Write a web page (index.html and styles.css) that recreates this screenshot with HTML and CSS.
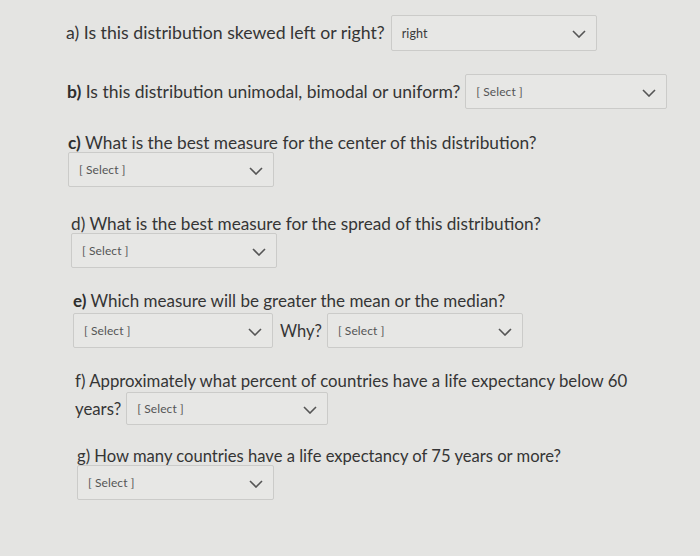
FILE: index.html
```html
<!DOCTYPE html>
<html>
<head>
<meta charset="utf-8">
<link rel="stylesheet" href="styles.css">
</head>
<body>
<div class="quiz">
  <div class="row row-a">
    <span class="q">a) Is this distribution skewed left or right?</span>
    <div class="sel sel-a"><span class="val val-dark">right</span><svg class="chev" viewBox="0 0 14 8"><path d="M1 1 L7 7 L13 1"/></svg></div>
  </div>
  <div class="row row-b">
    <span class="q"><b>b)</b> Is this distribution unimodal, bimodal or uniform?</span>
    <div class="sel sel-b"><span class="val">[ Select ]</span><svg class="chev" viewBox="0 0 14 8"><path d="M1 1 L7 7 L13 1"/></svg></div>
  </div>
  <div class="block blk-c">
    <div class="q"><b>c)</b> What is the best measure for the center of this distribution?</div>
    <div class="sel"><span class="val">[ Select ]</span><svg class="chev" viewBox="0 0 14 8"><path d="M1 1 L7 7 L13 1"/></svg></div>
  </div>
  <div class="block blk-d">
    <div class="q">d) What is the best measure for the spread of this distribution?</div>
    <div class="sel"><span class="val">[ Select ]</span><svg class="chev" viewBox="0 0 14 8"><path d="M1 1 L7 7 L13 1"/></svg></div>
  </div>
  <div class="block blk-e">
    <div class="q"><b>e)</b> Which measure will be greater the mean or the median?</div>
    <div class="row-inline">
      <div class="sel sel-e1"><span class="val">[ Select ]</span><svg class="chev" viewBox="0 0 14 8"><path d="M1 1 L7 7 L13 1"/></svg></div>
      <span class="q why">Why?</span>
      <div class="sel sel-e2"><span class="val">[ Select ]</span><svg class="chev" viewBox="0 0 14 8"><path d="M1 1 L7 7 L13 1"/></svg></div>
    </div>
  </div>
  <div class="block blk-f">
    <div class="q">f) Approximately what percent of countries have a life expectancy below 60</div>
    <div class="row-inline">
      <span class="q">years?</span>
      <div class="sel sel-f"><span class="val">[ Select ]</span><svg class="chev" viewBox="0 0 14 8"><path d="M1 1 L7 7 L13 1"/></svg></div>
    </div>
  </div>
  <div class="block blk-g">
    <div class="q">g) How many countries have a life expectancy of 75 years or more?</div>
    <div class="sel"><span class="val">[ Select ]</span><svg class="chev" viewBox="0 0 14 8"><path d="M1 1 L7 7 L13 1"/></svg></div>
  </div>
</div>
</body>
</html>
```
FILE: styles.css
```css
html, body {
  margin: 0;
  padding: 0;
  background: #e4e4e2;
  width: 700px;
  height: 556px;
  overflow: hidden;
}
.quiz {
  font-family: Lato, "Open Sans", sans-serif;
  color: #353535;
  padding: 15px 0 0 66px;
}
.q {
  font-size: 16.5px;
  line-height: 18px;
  white-space: nowrap;
}
.q b { font-weight: 700; color: #2e2e2e; }
.row-a .q { font-size: 17.7px; }
.row-b .q { font-size: 17.5px; }
.blk-c .q { font-size: 17.3px; }
.blk-d .q { font-size: 17.2px; }
.blk-e .q { font-size: 17px; }
.blk-f .q { font-size: 16.8px; }
.blk-g .q { font-size: 16.6px; }
.row {
  display: flex;
  align-items: center;
  gap: 6px;
}
.row-b { margin-top: 23px; margin-left: 1px; gap: 5px; }
.sel {
  position: relative;
  box-sizing: border-box;
  width: 206px;
  height: 35px;
  border: 1px solid #cbcbc9;
  border-radius: 2px;
  background: #e7e7e5;
  display: flex;
  align-items: center;
  padding-left: 10px;
}
.sel-a { height: 36px; width: 206px; }
.sel-b { width: 202px; }
.val {
  font-size: 12px;
  color: #555;
  letter-spacing: 0.1px;
}
.val-dark { color: #3a3a3a; font-size: 12.5px; }
.chev {
  position: absolute;
  right: 10px;
  top: 50%;
  width: 14px;
  height: 8px;
  margin-top: -3px;
  fill: none;
  stroke: #555;
  stroke-width: 1.6;
}
.blk-c { margin-top: 25px; margin-left: 2px; }
.blk-d { margin-top: 28px; margin-left: 5px; }
.blk-e { margin-top: 24px; margin-left: 7px; }
.blk-e .row-inline { margin-top: 3px; }
.blk-f { margin-top: 24px; margin-left: 9px; }
.blk-f .row-inline { margin-top: 2px; }
.blk-g { margin-top: 22px; margin-left: 11px; }
.blk-c .sel, .blk-d .sel { width: 206px; }
.blk-g .sel { width: 197px; }
.row-inline {
  display: flex;
  align-items: center;
  gap: 6px;
}
.sel-e1 { width: 200px; }
.sel-e2 { width: 196px; margin-left: -1px; }
.blk-e .why { font-size: 16.5px; margin-left: 1px; }
.sel-f { width: 202px; height: 33px; margin-left: -1px; }
```
